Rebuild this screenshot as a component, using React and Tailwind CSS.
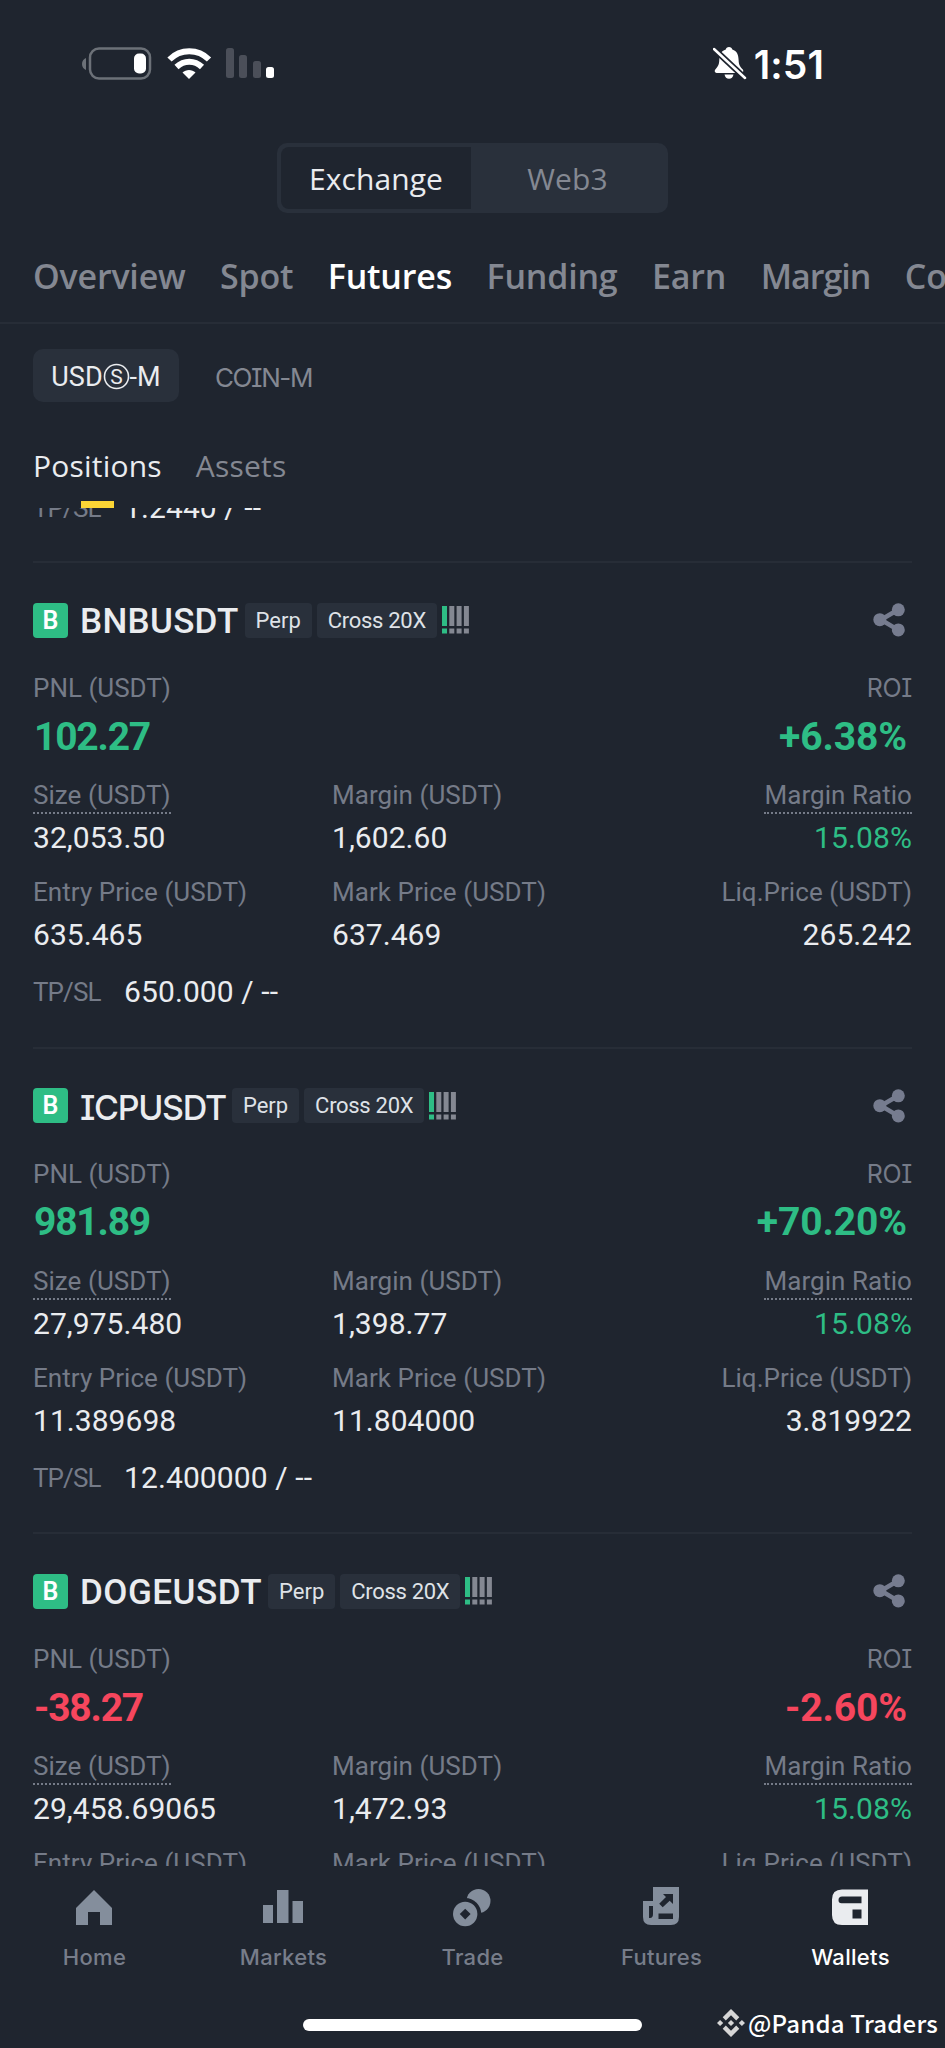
import clsx from 'clsx';

const positions = [
  {
    symbol: 'BNBUSDT',
    symbolClass: "font-['Roboto'] text-[35px] tracking-[0.3px]",
    pnl: '102.27',
    roi: '+6.38%',
    size: '32,053.50',
    margin: '1,602.60',
    entry: '635.465',
    mark: '637.469',
    liq: '265.242',
    tpsl: '650.000 / --',
  },
  {
    symbol: 'ICPUSDT',
    symbolClass: "font-['Inter'] text-[34px] [font-feature-settings:'cv08'] tracking-[-1.3px]",
    pnl: '981.89',
    roi: '+70.20%',
    size: '27,975.480',
    margin: '1,398.77',
    entry: '11.389698',
    mark: '11.804000',
    liq: '3.819922',
    tpsl: '12.400000 / --',
  },
  {
    symbol: 'DOGEUSDT',
    symbolClass: "font-['Roboto'] text-[35px] tracking-[0.5px]",
    pnl: '-38.27',
    roi: '-2.60%',
    down: true,
    size: '29,458.69065',
    margin: '1,472.93',
  },
];

const tabs = ['Overview', 'Spot', 'Futures', 'Funding', 'Earn', 'Margin', 'Copy'];

const StatusBar = () => (
  <div className="flex h-[143px] items-start pt-[44px] text-white">
    <svg className="ml-[82px] mt-[3px]" width="194" height="34" viewBox="0 0 194 34">
      <path d="M4 11v12c-2.500-1-4-3-4-6s1.500-5 4-6z" fill="#6c7178" />
      <rect x="8" y="1.500" width="60" height="30" rx="9" fill="none" stroke="#6c7178" strokeWidth="2.500" />
      <rect x="52" y="6.500" width="12" height="20" rx="5" fill="#fff" />
      <g fill="none" stroke="#fff" strokeWidth="6">
        <path d="M87.500 12.500c11-11 28.500-11 39.500 0" />
        <path d="M94.500 20c7.500-7 18-7 25.500 0" />
      </g>
      <path d="M107 32l-6.500-6.500c3.500-3.500 9.500-3.500 13 0z" fill="#fff" />
      <rect x="144" y="1" width="8" height="30" rx="2.500" fill="#4b4f59" />
      <rect x="157" y="8" width="8" height="23" rx="2.500" fill="#4b4f59" />
      <rect x="171" y="14" width="8" height="17" rx="2.500" fill="#4b4f59" />
      <rect x="184" y="20" width="8" height="11" rx="2.500" fill="#fff" />
    </svg>
    <svg className="ml-auto mt-[2px]" width="34" height="34" viewBox="0 0 34 34">
      <path d="M16 1c-1.800 0-3 1.200-3.200 2.600C8 5 6.500 9 6.300 14c-.2 5-1.500 6.500-4 9.500-1.500 2 .2 3.500 2 3.500h23.500c1.800 0 3.300-1.500 2-3.500-2.800-3-4-4.500-4.200-9.500C25.400 9 24 5 19.300 3.600 19 2.200 17.800 1 16 1z" fill="#fff" />
      <path d="M11.500 28.500h9c-.5 2.800-2.200 4.200-4.500 4.200s-4-1.400-4.500-4.200z" fill="#fff" />
      <path d="M1 3l31 29" stroke="#1f252f" strokeWidth="6" />
      <path d="M1 3l31 29" stroke="#fff" strokeWidth="2.500" strokeLinecap="round" />
    </svg>
    <span className="ml-[7px] mr-[121px] font-['Inter',sans-serif] text-[39px] font-semibold leading-[42px] tracking-[0.1px]">1:51</span>
  </div>
);

const RiskBars = () => (
  <svg className="ml-[5px]" width="28" height="28" viewBox="0 0 28 28">
    {[0, 7.3, 14.6, 21.9].map((x, i) => (
      <g key={x} fill={i === 0 ? '#2ebd85' : '#848892'}>
        <rect x={x} y="0" width="5" height="20" />
        <rect x={x} y="22.500" width="5" height="5" />
      </g>
    ))}
  </svg>
);

const ShareIcon = () => (
  <svg className="ml-auto mr-[6px]" width="33" height="34" viewBox="0 0 33 34">
    <g fill="#767c8f">
      <circle cx="6.800" cy="16.700" r="6.500" />
      <circle cx="25.300" cy="6.800" r="6.500" />
      <circle cx="25.300" cy="26.900" r="6.500" />
    </g>
    <path d="M25 6.800L8 16.700l17 10.200" fill="none" stroke="#767c8f" strokeWidth="4.600" />
  </svg>
);

const Field = ({ label, value, right, dotted, green }) => (
  <div className={clsx('flex flex-col', right ? 'items-end' : 'items-start')}>
    <span
      className={clsx(
        'h-[38px] whitespace-nowrap text-[26px] leading-[38px] tracking-[0.05px] text-[#757b88]',
        dotted && 'border-b-2 border-dotted border-[#757b88]'
      )}
    >
      {label}
    </span>
    {value && (
      <span
        className={clsx(
          'mt-[4px] text-[30px] leading-[40px]',
          green ? 'text-[#2ebd85] tracking-[0.1px]' : 'text-[#eaecef] tracking-[0.05px]'
        )}
      >
        {value}
      </span>
    )}
  </div>
);

const TpSl = ({ value }) => (
  <div className="flex h-[40px] items-center">
    <span className="w-[91px] text-[26px] leading-[36px] tracking-[-0.9px] text-[#757b88]">TP/SL</span>
    <span className="text-[30px] leading-[40px] tracking-[0.1px] text-[#eaecef]">{value}</span>
  </div>
);

const PositionCard = ({ p }) => {
  const tone = p.down ? 'text-[#f6465d]' : 'text-[#2ebd85]';

  return (
    <div className="h-[485.5px] shrink-0 border-t-2 border-[#272d37] pt-[39px]">
      <div className="flex h-[36px] items-center">
        <span className="flex size-[35px] items-center justify-center rounded-[4px] bg-[#2ebd85] pt-[1px] text-[25px] font-semibold text-white">B</span>
        <span className={clsx('ml-[12px] pt-[4px] font-medium leading-[36px] text-[#eaecef]', p.symbolClass)}>{p.symbol}</span>
        <span className="ml-[6px] flex h-[35px] items-center rounded-[4px] bg-[#29303b] px-[11px] text-[22px] text-[#dfe2e7]">Perp</span>
        <span className="ml-[5px] flex h-[35px] items-center rounded-[4px] bg-[#29303b] px-[11px] text-[22px] tracking-[-0.3px] text-[#dfe2e7]">Cross 20X</span>
        <RiskBars />
        <ShareIcon />
      </div>

      <div className="mt-[32px] flex justify-between text-[26px] leading-[36px] text-[#757b88]">
        <span>PNL (USDT)</span>
        <span className="font-['Inter'] text-[25px] tracking-[-0.3px] [font-feature-settings:'cv08']">ROI</span>
      </div>
      <div className={clsx('mt-[7px] flex h-[48px] items-center justify-between pl-[1px] pr-[5px] text-[39px] font-bold', tone)}>
        <span className="tracking-[-1.2px]">{p.pnl}</span>
        <span className="tracking-[-0.1px]">{p.roi}</span>
      </div>

      <div className="mt-[15px] grid grid-cols-[299px_1fr_auto] gap-y-[15px]">
        <Field label="Size (USDT)" value={p.size} dotted />
        <Field label="Margin (USDT)" value={p.margin} />
        <Field label="Margin Ratio" value="15.08%" right dotted green />
        <Field label="Entry Price (USDT)" value={p.entry} />
        <Field label="Mark Price (USDT)" value={p.mark} />
        <Field label="Liq.Price (USDT)" value={p.liq} right />
      </div>
      {p.tpsl && (
        <div className="mt-[17px]">
          <TpSl value={p.tpsl} />
        </div>
      )}
    </div>
  );
};

const navItems = [
  {
    label: 'Home',
    icon: <path d="M20 4l18 18v17H26V26H14v13H2V22z" />,
  },
  {
    label: 'Markets',
    icon: <path d="M0 19h10v18H0zM14 4h11.500v33H14zM29.500 15H40v22H29.500z" />,
  },
  {
    label: 'Trade',
    icon: (
      <>
        <circle cx="26.500" cy="15" r="12" />
        <circle cx="13.200" cy="28" r="16" fill="#1f252f" />
        <path fillRule="evenodd" d="M13.200 15.800a12.200 12.200 0 100 24.400 12.200 12.200 0 000-24.400zM13.200 22.700l5.400 5.300-5.400 5.400L7.800 28z" />
      </>
    ),
  },
  {
    label: 'Futures',
    icon: (
      <path
        fillRule="evenodd"
        d="M12 1h26v30q0 8-8 8H10q-8 0-8-8V15h10zM8 20v12h1q3 0 3-4v-8zM17.500 27.500h14.500v5.500H17.500zM22 8h10v10l-3.300-3.300-7 6.500-3.500-3.500 6.800-6.700z"
      />
    ),
  },
  {
    label: 'Wallets',
    active: true,
    icon: (
      <path
        fillRule="evenodd"
        d="M12 3.500h26V39H12Q2 39 2 29V13.500q0-10 10-10zM12 10.500q-3.500 0-3.500 3.500t3.500 3.200h19.500v-6.700zM22.500 23.500h9v9h-9z"
      />
    ),
  },
];

const BottomNav = () => (
  <div className="grid h-[182px] grid-cols-5 pt-[20px] font-['Inter',sans-serif]">
    {navItems.map((item) => (
      <div
        key={item.label}
        className={clsx('flex flex-col items-center', item.active ? 'text-[#eaecef]' : 'text-[#848e9c]')}
      >
        <svg className="mr-[1px]" width="40" height="42" viewBox="0 0 40 42" fill="currentColor">
          {item.icon}
        </svg>
        <span className={clsx('mt-[13px] text-[22px] font-medium leading-[32px] tracking-[0.3px]', item.active ? 'text-white' : 'text-[#777d8a]')}>{item.label}</span>
      </div>
    ))}
  </div>
);

export default function App() {
  return (
    <div className="relative flex h-[2048px] w-[945px] flex-col overflow-hidden bg-[#1f252f] font-['Roboto',sans-serif]">
      <StatusBar />

      <div className="mx-auto flex h-[70px] w-[391px] shrink-0 rounded-[10px] bg-[#29303b] p-[4px] font-['Open_Sans'] text-[30px] font-medium tracking-[0.1px]">
        <div className="flex w-[190px] items-center justify-center rounded-l-[8px] bg-[#1f252f] text-[#eaecef]">Exchange</div>
        <div className="flex flex-1 items-center justify-center text-[#848892]">Web3</div>
      </div>

      <div className="flex h-[111px] shrink-0 gap-[34.5px] overflow-hidden whitespace-nowrap border-b-2 border-[#272d37] pl-[33px] pt-[42px] font-['Open_Sans'] text-[34px] font-semibold leading-[42px] tracking-[-0.2px] text-[#848892]">
        {tabs.map((tab) => (
          <span key={tab} className={clsx(tab === 'Futures' && 'text-white', tab === 'Margin' && 'tracking-[-1px]')}>{tab}</span>
        ))}
      </div>

      <div className="flex h-[78px] shrink-0 items-end pl-[33px] text-[27px]">
        <div className="flex h-[53px] w-[146px] items-center justify-center rounded-[10px] bg-[#29303b] pt-[3px] text-[#eaecef]">
          USD
          <svg className="-mt-[2px]" width="27" height="27" viewBox="0 0 27 27">
            <circle cx="13.500" cy="13.500" r="12" fill="none" stroke="currentColor" strokeWidth="1.600" />
            <text x="13.500" y="21" textAnchor="middle" fontSize="21" fill="currentColor">S</text>
          </svg>
          -M
        </div>
        <div className="ml-[36px] flex h-[53px] items-center pt-[3px] font-['Inter'] text-[26px] tracking-[-1.4px] text-[#848892] [font-feature-settings:'cv08']">COIN-M</div>
      </div>

      <div className="relative h-[106px] shrink-0 pl-[33px] pt-[44px]">
        <div className="flex gap-[34px] font-['Open_Sans'] text-[30px] font-medium leading-[40px] tracking-[0.2px]">
          <span className="text-[#eaecef]">Positions</span>
          <span className="text-[#848892]">Assets</span>
        </div>
        <div className="absolute left-[81px] top-[99px] z-10 h-[7px] w-[33px] bg-[#fcd535]" />
      </div>

      <div className="flex h-[1358px] shrink-0 flex-col overflow-hidden px-[33px]">
        <div className="-mt-[20px] h-[73px] shrink-0">
          <TpSl value="1.2440 / --" />
        </div>
        {positions.map((p) => (
          <PositionCard key={p.symbol} p={p} />
        ))}
      </div>

      <BottomNav />

      <div className="absolute left-[303px] top-[2019px] h-[12px] w-[339px] rounded-full bg-white" />
      <div className="absolute right-[7px] top-[2007px] flex items-center gap-[3px] font-['Noto_Sans_CJK_SC',sans-serif] text-[24px] font-medium leading-[32px] tracking-[0.2px] text-white">
        <svg width="28" height="28" viewBox="0 0 28 28" fill="#d6d6d6">
          <path d="M14 0l8.300 8.300-3.100 3.100L14 6.200l-5.200 5.200-3.100-3.100zM14 28l8.300-8.300-3.100-3.100-5.200 5.200-5.200-5.200-3.100 3.100zM14 10.900l3.100 3.100-3.100 3.100-3.100-3.100zM3.100 10.900L6.200 14l-3.100 3.100L0 14zM24.900 10.900L28 14l-3.100 3.100-3.100-3.100z" />
        </svg>
        @Panda Traders
      </div>
    </div>
  );
}
